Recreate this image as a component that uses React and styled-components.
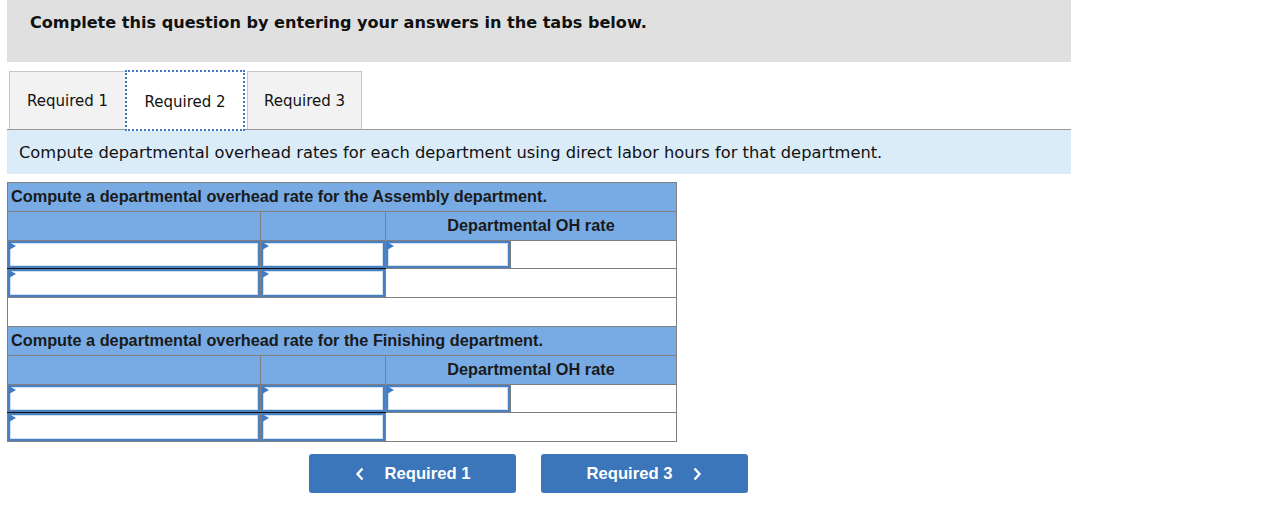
import React from "react";
import styled, { createGlobalStyle } from "styled-components";

const Global = createGlobalStyle`
  html, body { margin: 0; padding: 0; background: #fff; }
  body { font-family: Verdana, "DejaVu Sans", sans-serif; color: #000; }
`;

const Page = styled.div`
  width: 1064px;
  padding-left: 7px;
`;

const Banner = styled.div`
  height: 62px;
  background: #e0e0e0;
  display: flex;
  align-items: center;
  padding-left: 23px;
  padding-bottom: 17px;
  box-sizing: border-box;
  font-family: Verdana, "DejaVu Sans", sans-serif;
  font-weight: bold;
  font-size: 16.1px;
  color: #111;
`;

const TabBar = styled.div`
  display: flex;
  align-items: flex-end;
  margin-top: 9px;
  padding-left: 2px;
  border-bottom: 1px solid #9a9a9a;
  height: 59px;
  box-sizing: border-box;
`;

const Tab = styled.div`
  width: ${(p) => p.$w}px;
  height: ${(p) => (p.$active ? "61px" : "58px")};
  margin-bottom: ${(p) => (p.$active ? "-2px" : "0")};
  margin-left: ${(p) => (p.$active ? "-1px" : "0")};
  box-sizing: border-box;
  padding-top: ${(p) => (p.$active ? "2px" : "1px")};
  display: flex;
  align-items: center;
  justify-content: center;
  background: ${(p) => (p.$active ? "#fff" : "#f2f2f2")};
  border: ${(p) => (p.$active ? "2px dotted #3f78bd" : "1px solid #c6c6c6")};
  border-bottom: ${(p) => (p.$active ? "2px dotted #3f78bd" : "none")};
  margin-right: ${(p) => (p.$gap ? "2px" : "0")};
  font-size: 15px;
  color: #111;
  white-space: nowrap;
  position: relative;
  z-index: ${(p) => (p.$active ? 1 : 0)};
`;

const Instruction = styled.div`
  height: 44px;
  background: #dbecf9;
  display: flex;
  align-items: center;
  padding-left: 12px;
  font-size: 16.3px;
  color: #111;
`;

const Table = styled.table`
  margin-top: 8px;
  border-collapse: collapse;
  table-layout: fixed;
  width: 669px;
  font-family: Arial, "Liberation Sans", sans-serif;
  font-size: 16.3px;
  font-weight: bold;
  color: #1a1a1a;
`;

const Row = styled.tr`
  height: 28.8px;
`;

const TitleCell = styled.td`
  background: #78abe3;
  border: 1px solid #7f7f7f;
  padding: 0 3px;
  text-align: left;
  white-space: nowrap;
`;

const HeadCell = styled.td`
  background: #78abe3;
  border: 1px solid #7f7f7f;
  text-align: center;
  padding: 0;
`;

const Cell = styled.td`
  border: 1px solid #7f7f7f;
  background: #fff;
  padding: 0;
`;

const InputCell = styled.td`
  position: relative;
  border: 1px solid #7f7f7f;
  border-bottom: 1px solid ${(p) => (p.$dark ? "#111" : "#7f7f7f")};
  padding: 0;
  vertical-align: top;
`;

const Field = styled.input`
  display: block;
  width: 100%;
  height: 27.8px;
  box-sizing: border-box;
  border: 2px solid #4a80c0;
  box-shadow: inset 0 0 0 1px #cfe0f3;
  outline: none;
  background: #fff;
  margin: 0;
`;

const Marker = styled.span`
  position: absolute;
  left: 1px;
  top: 1px;
  width: 0;
  height: 0;
  border-top: 4px solid transparent;
  border-bottom: 4px solid transparent;
  border-left: 7px solid #3d7cc4;
  pointer-events: none;
`;

const Nav = styled.div`
  display: flex;
  gap: 25px;
  margin-top: 12px;
  padding-left: 302px;
`;

const NavButton = styled.button`
  width: 207px;
  height: 39px;
  border: none;
  border-radius: 3px;
  background: #3a76b9;
  color: #fff;
  font-family: Arial, "Liberation Sans", sans-serif;
  font-weight: bold;
  font-size: 16.6px;
  display: flex;
  align-items: center;
  justify-content: center;
  gap: ${(p) => p.$gap}px;
  padding: 0;
  cursor: pointer;
`;

const Chevron = ({ dir }) => (
  <svg width="10" height="14" viewBox="0 0 10 14" aria-hidden="true">
    <path
      d={dir === "left" ? "M7.5 1.5 L2.5 7 L7.5 12.5" : "M2.5 1.5 L7.5 7 L2.5 12.5"}
      fill="none"
      stroke="#fff"
      strokeWidth="2.4"
    />
  </svg>
);

const InputTd = ({ dark }) => (
  <InputCell $dark={dark}>
    <Field />
    <Marker />
  </InputCell>
);

const Section = ({ name, first }) => (
  <>
    <Row>
      <TitleCell colSpan={4}>
        Compute a departmental overhead rate for the {name} department.
      </TitleCell>
    </Row>
    <Row>
      <HeadCell />
      <HeadCell />
      <HeadCell colSpan={2}>Departmental OH rate</HeadCell>
    </Row>
    <Row>
      <InputTd dark />
      <InputTd dark />
      <InputTd />
      <Cell />
    </Row>
    <Row>
      <InputTd />
      <InputTd />
      <Cell colSpan={2} />
    </Row>
    {first && (
      <Row>
        <Cell colSpan={4} />
      </Row>
    )}
  </>
);

export default function App() {
  return (
    <>
      <Global />
      <Page>
        <Banner>Complete this question by entering your answers in the tabs below.</Banner>
        <TabBar>
          <Tab $w={117}>Required 1</Tab>
          <Tab $active $gap $w={120}>Required 2</Tab>
          <Tab $w={115}>Required 3</Tab>
        </TabBar>
        <Instruction>
          Compute departmental overhead rates for each department using direct labor hours for that department.
        </Instruction>
        <Table>
          <colgroup>
            <col style={{ width: 253 }} />
            <col style={{ width: 125 }} />
            <col style={{ width: 125 }} />
            <col style={{ width: 166 }} />
          </colgroup>
          <tbody>
            <Section name="Assembly" first />
            <Section name="Finishing" />
          </tbody>
        </Table>
        <Nav>
          <NavButton $gap={20}>
            <Chevron dir="left" />
            Required 1
          </NavButton>
          <NavButton $gap={20}>
            Required 3
            <Chevron dir="right" />
          </NavButton>
        </Nav>
      </Page>
    </>
  );
}
